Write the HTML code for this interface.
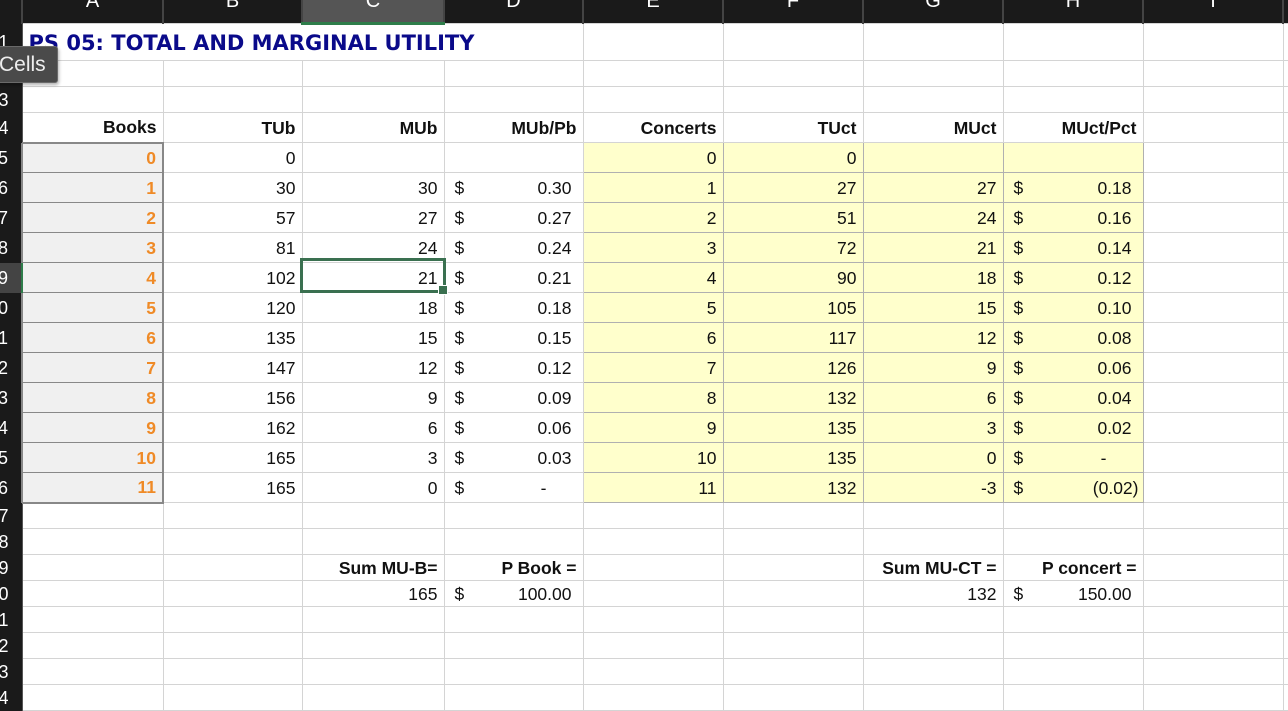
<!DOCTYPE html>
<html><head><meta charset="utf-8"><style>
body{margin:0;width:1288px;height:708px;overflow:hidden;background:#fff;font-family:"Liberation Sans",Arial,sans-serif;position:relative}
table{border-collapse:collapse;table-layout:fixed;position:absolute;left:0;top:0;width:1428px}
td{border:1px solid #d4d4d4;padding:0 6px 0 0;text-align:right;font-size:17.5px;color:#111;white-space:nowrap;overflow:hidden;vertical-align:middle;line-height:18px}
td.rh{background:#1a1a1a;color:#fff;border:0;padding:0;font-size:18px;border-right:1px solid #555;position:relative}
td.rh div{position:absolute;right:13px;top:50%;transform:translateY(-50%)}
tr.hd td{background:#1a1a1a;color:#fff;border:0;border-right:2px solid #444;text-align:center;padding:0;font-size:20px;vertical-align:top;line-height:10px;height:22px}
tr.hd td span{position:relative;top:-4px}
tr.hd td.sel{background:#555;border-bottom:3px solid #2e7d4a}
b{font-weight:bold}
.a{background:#f0f0f0;color:#ef8a26;font-weight:bold;border-left:2px solid #888;border-right:2px solid #888;border-color:#888}
.y{background:#ffffcc;border-color:#b0b0b0}
.d{text-align:left;padding-left:10px;padding-right:0}
.cur span{float:right;padding-right:11px}
</style></head><body>
<table>
<colgroup><col style="width:22px"><col style="width:141px"><col style="width:139px"><col style="width:142px"><col style="width:139px"><col style="width:140px"><col style="width:140px"><col style="width:140px"><col style="width:140px"><col style="width:140px"><col style="width:145px"></colgroup>
<tr class="hd"><td></td><td><span>A</span></td><td><span>B</span></td><td class="sel"><span>C</span></td><td><span>D</span></td><td><span>E</span></td><td><span>F</span></td><td><span>G</span></td><td><span>H</span></td><td><span>I</span></td><td></td></tr>
<tr style="height:37px"><td class="rh"><div>1</div></td><td colspan="4" style="text-align:left;padding-left:6px;font-family:'Comic Sans MS','DejaVu Sans',sans-serif;font-weight:bold;color:#0a0a8a;font-size:21px;border-right:1px solid #d4d4d4">PS 05: TOTAL AND MARGINAL UTILITY</td><td></td><td></td><td></td><td></td><td></td><td></td></tr>
<tr style="height:26px"><td class="rh"><div>2</div></td><td></td><td></td><td></td><td></td><td></td><td></td><td></td><td></td><td></td><td></td></tr>
<tr style="height:26px"><td class="rh"><div>3</div></td><td></td><td></td><td></td><td></td><td></td><td></td><td></td><td></td><td></td><td></td></tr>
<tr style="height:30px"><td class="rh"><div>4</div></td><td><b>Books</b></td><td><b>TUb</b></td><td><b>MUb</b></td><td><b>MUb/Pb</b></td><td><b>Concerts</b></td><td><b>TUct</b></td><td><b>MUct</b></td><td><b>MUct/Pct</b></td><td></td><td></td></tr>
<tr style="height:30px"><td class="rh"><div>5</div></td><td class="a" style="border-top:2px solid #888">0</td><td>0</td><td></td><td></td><td class="y">0</td><td class="y">0</td><td class="y"></td><td class="y"></td><td></td><td></td></tr>
<tr style="height:30px"><td class="rh"><div>6</div></td><td class="a">1</td><td>30</td><td>30</td><td class="d cur">$<span>0.30</span></td><td class="y">1</td><td class="y">27</td><td class="y">27</td><td class="y d cur">$<span>0.18</span></td><td></td><td></td></tr>
<tr style="height:30px"><td class="rh"><div>7</div></td><td class="a">2</td><td>57</td><td>27</td><td class="d cur">$<span>0.27</span></td><td class="y">2</td><td class="y">51</td><td class="y">24</td><td class="y d cur">$<span>0.16</span></td><td></td><td></td></tr>
<tr style="height:30px"><td class="rh"><div>8</div></td><td class="a">3</td><td>81</td><td>24</td><td class="d cur">$<span>0.24</span></td><td class="y">3</td><td class="y">72</td><td class="y">21</td><td class="y d cur">$<span>0.14</span></td><td></td><td></td></tr>
<tr style="height:30px"><td class="rh" style="background:#444;border-right:2px solid #2e7d4a"><div>9</div></td><td class="a">4</td><td>102</td><td>21</td><td class="d cur">$<span>0.21</span></td><td class="y">4</td><td class="y">90</td><td class="y">18</td><td class="y d cur">$<span>0.12</span></td><td></td><td></td></tr>
<tr style="height:30px"><td class="rh"><div>10</div></td><td class="a">5</td><td>120</td><td>18</td><td class="d cur">$<span>0.18</span></td><td class="y">5</td><td class="y">105</td><td class="y">15</td><td class="y d cur">$<span>0.10</span></td><td></td><td></td></tr>
<tr style="height:30px"><td class="rh"><div>11</div></td><td class="a">6</td><td>135</td><td>15</td><td class="d cur">$<span>0.15</span></td><td class="y">6</td><td class="y">117</td><td class="y">12</td><td class="y d cur">$<span>0.08</span></td><td></td><td></td></tr>
<tr style="height:30px"><td class="rh"><div>12</div></td><td class="a">7</td><td>147</td><td>12</td><td class="d cur">$<span>0.12</span></td><td class="y">7</td><td class="y">126</td><td class="y">9</td><td class="y d cur">$<span>0.06</span></td><td></td><td></td></tr>
<tr style="height:30px"><td class="rh"><div>13</div></td><td class="a">8</td><td>156</td><td>9</td><td class="d cur">$<span>0.09</span></td><td class="y">8</td><td class="y">132</td><td class="y">6</td><td class="y d cur">$<span>0.04</span></td><td></td><td></td></tr>
<tr style="height:30px"><td class="rh"><div>14</div></td><td class="a">9</td><td>162</td><td>6</td><td class="d cur">$<span>0.06</span></td><td class="y">9</td><td class="y">135</td><td class="y">3</td><td class="y d cur">$<span>0.02</span></td><td></td><td></td></tr>
<tr style="height:30px"><td class="rh"><div>15</div></td><td class="a">10</td><td>165</td><td>3</td><td class="d cur">$<span>0.03</span></td><td class="y">10</td><td class="y">135</td><td class="y">0</td><td class="y d cur">$<span style="padding-right:36px">-</span></td><td></td><td></td></tr>
<tr style="height:30px"><td class="rh"><div>16</div></td><td class="a" style="border-bottom:2px solid #888">11</td><td>165</td><td>0</td><td class="d cur">$<span style="padding-right:36px">-</span></td><td class="y">11</td><td class="y">132</td><td class="y">-3</td><td class="y d cur">$<span style="padding-right:4px">(0.02)</span></td><td></td><td></td></tr>
<tr style="height:26px"><td class="rh"><div>17</div></td><td></td><td></td><td></td><td></td><td></td><td></td><td></td><td></td><td></td><td></td></tr>
<tr style="height:26px"><td class="rh"><div>18</div></td><td></td><td></td><td></td><td></td><td></td><td></td><td></td><td></td><td></td><td></td></tr>
<tr style="height:26px"><td class="rh"><div>19</div></td><td></td><td></td><td><b>Sum MU-B=</b></td><td><b>P Book =</b></td><td></td><td></td><td><b>Sum MU-CT =</b></td><td><b>P concert =</b></td><td></td><td></td></tr>
<tr style="height:26px"><td class="rh"><div>20</div></td><td></td><td></td><td>165</td><td class="d cur">$<span>100.00</span></td><td></td><td></td><td>132</td><td class="d cur">$<span>150.00</span></td><td></td><td></td></tr>
<tr style="height:26px"><td class="rh"><div>21</div></td><td></td><td></td><td></td><td></td><td></td><td></td><td></td><td></td><td></td><td></td></tr>
<tr style="height:26px"><td class="rh"><div>22</div></td><td></td><td></td><td></td><td></td><td></td><td></td><td></td><td></td><td></td><td></td></tr>
<tr style="height:26px"><td class="rh"><div>23</div></td><td></td><td></td><td></td><td></td><td></td><td></td><td></td><td></td><td></td><td></td></tr>
<tr style="height:26px"><td class="rh"><div>24</div></td><td></td><td></td><td></td><td></td><td></td><td></td><td></td><td></td><td></td><td></td></tr>
</table>
<div style="position:absolute;left:300px;top:258px;width:140px;height:29px;border:3px solid #3a7050"></div>
<div style="position:absolute;left:438px;top:285px;width:8px;height:8px;background:#3a7050;border:1px solid #fff"></div>
<div style="position:absolute;left:-8px;top:46px;width:66px;height:37px;background:#4a4a4a;border:1px solid #6a6a6a;border-radius:3px;color:#eee;font-size:21px;line-height:36px;padding-left:6px;box-sizing:border-box;box-shadow:1px 2px 3px rgba(0,0,0,.3)">Cells</div>
</body></html>
